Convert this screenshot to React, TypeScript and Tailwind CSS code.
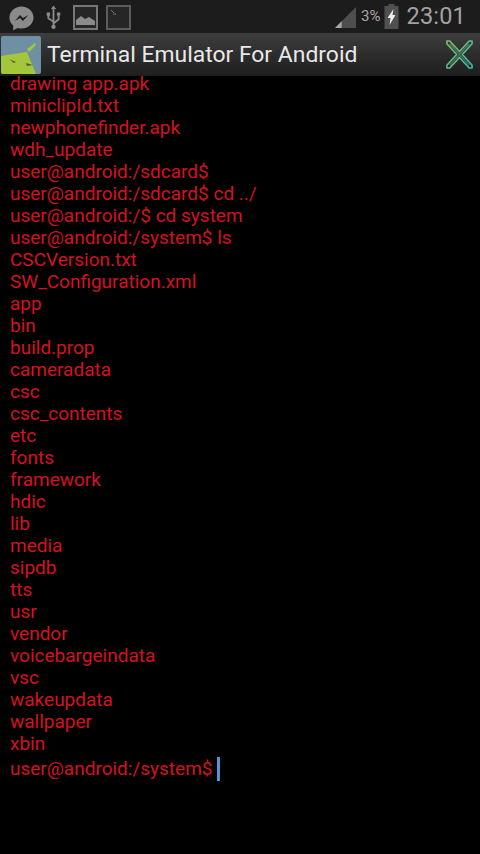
export default function App() {
  const lines = [
    "drawing app.apk","miniclipId.txt","newphonefinder.apk","wdh_update","user@android:/sdcard$","user@android:/sdcard$ cd ../","user@android:/$ cd system","user@android:/system$ ls","CSCVersion.txt","SW_Configuration.xml","app","bin","build.prop","cameradata","csc","csc_contents","etc","fonts","framework","hdic","lib","media","sipdb","tts","usr","vendor","voicebargeindata","vsc","wakeupdata","wallpaper","xbin",
  ];
  return (
    <div className="w-[480px] h-[854px] bg-black overflow-hidden flex flex-col font-['Roboto',sans-serif]">
      <div className="h-[33px] shrink-0 bg-[#1c1c1c] flex items-center pl-[8px] pr-[14px] text-[#8f8f8f]">
        <svg width="27" height="28" viewBox="0 0 28 28" className="mr-[10px] mt-[2px]">
          <path fill="#8a8a8a" d="M14 2C7 2 1.5 7.2 1.5 13.6c0 3.4 1.5 6.3 3.9 8.3V27l4.6-2.6c1.3.4 2.6.6 4 .6 7 0 12.5-5 12.5-11.4S21 2 14 2z"/>
          <path fill="#1c1c1c" d="M7 17l5.5-6 3 3 5.5-3-5.5 6-3-3z"/>
        </svg>
        <svg width="17" height="25" viewBox="0 0 20 28" className="mr-[11px] mt-[2px]" fill="none" stroke="#8a8a8a" strokeWidth="2.2">
          <path d="M10 25V3M10 19l-6-4v-4M10 21l6-5v-4"/>
          <path fill="#8a8a8a" stroke="none" d="M10 0l3 4H7zM2 8h4v4H2zM14 8h4v4h-4z"/>
          <circle cx="10" cy="25" r="2.6" fill="#8a8a8a" stroke="none"/>
        </svg>
        <svg width="25" height="25" viewBox="0 0 25 25" className="mr-[8px] mt-[1px]">
          <rect x="1" y="1" width="23" height="23" fill="#262626" stroke="#777" strokeWidth="2"/>
          <path fill="#8a8a8a" d="M3 20v-5l5-4 4 3 4-2 6 4v4z"/>
        </svg>
        <svg width="25" height="25" viewBox="0 0 25 25" className="mt-[1px]">
          <rect x="1" y="1" width="23" height="23" fill="#262626" stroke="#5c5c5c" strokeWidth="2"/>
          <path fill="none" stroke="#777" strokeWidth="1" d="M5 5l3 3M7 9h3"/>
        </svg>
        <div className="flex-1" />
        <svg width="23" height="21" viewBox="0 0 22 22" className="mr-[4px] mt-[1px]">
          <path fill="#4e4e4e" d="M22 0v22H0z"/>
          <path fill="#a8a8a8" d="M7 15v7H0z"/>
        </svg>
        <span className="text-[15px] text-[#a8a8a8] mr-[4px]">3%</span>
        <svg width="15" height="25" viewBox="0 0 14 25" className="mr-[7px]">
          <path fill="#505050" d="M4 0h6v2h4v23H0V2h4z"/>
          <path fill="#eee" d="M9 5L3 14h3l-1 7 6-10H8z"/>
        </svg>
        <span className="text-[23.5px] text-[#a2a2a2] tracking-[0.2px]">23:01</span>
      </div>
      <div className="h-[43px] shrink-0 bg-gradient-to-b from-[#3d3d3d] to-[#1e1e1e] flex items-center pl-[1px] pr-[5px]">
        <div className="w-[40px] h-[38px] bg-[#6f8fa3] mt-[1px] relative overflow-hidden rounded-[2px]">
          <svg width="40" height="38" viewBox="0 0 40 38" className="absolute inset-0">
            <path fill="#a4c639" d="M0 20l26-4 9 22H0z"/>
            <path fill="#a4c639" d="M26 13l8-6 1 2-7 7z"/>
            <path fill="#555" d="M8 23l7 3-2 1zM25 27l7 2-6 1z"/>
          </svg>
        </div>
        <span className="ml-[6px] mt-[2px] text-[22.9px] leading-none text-[#e8e8e8]">Terminal Emulator For Android</span>
        <div className="flex-1" />
        <svg width="31" height="31" viewBox="0 0 32 32">
          <defs>
            <linearGradient id="g" x1="0" y1="0" x2="1" y2="1">
              <stop offset="0" stopColor="#7fbf6a" />
              <stop offset="1" stopColor="#3fb8a8" />
            </linearGradient>
          </defs>
          <path fill="none" stroke="url(#g)" strokeWidth="1.6" strokeLinejoin="round" d="M3 2h3l10 11L26 2h3v3L19 16l10 11v3h-3L16 19 6 30H3v-3l10-11L3 5z"/>
          <path fill="none" stroke="url(#g)" strokeOpacity="0.45" strokeWidth="2" d="M6 5l20 22M26 5L6 27"/>
        </svg>
      </div>
      <div className="pl-[10px] mt-[-3px] text-[19px] leading-[22px] text-[#d4121e]">
        {lines.map((l, i) => <div key={i} className="whitespace-pre">{l}</div>)}
        <div className="flex items-center mt-[2px]">
          <span>user@android:/system$</span>
          <span className="ml-[4px] w-[3px] h-[24px] bg-[#4f95d8]" />
        </div>
      </div>
    </div>
  );
}
